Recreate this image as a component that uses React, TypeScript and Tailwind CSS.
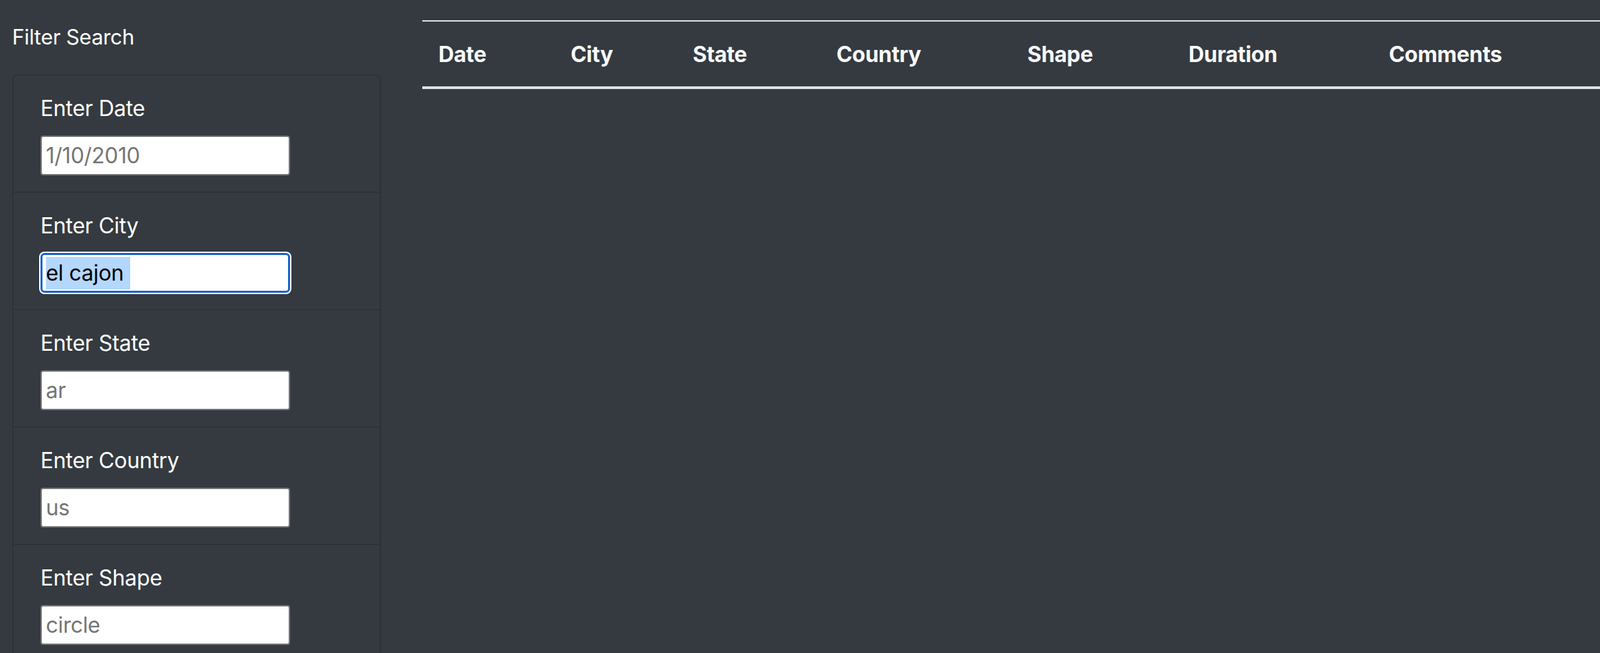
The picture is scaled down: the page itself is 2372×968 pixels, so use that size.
import React from "react";

interface FilterField {
  id: string;
  label: string;
  placeholder: string;
  focused?: boolean;
  value?: string;
}

const fields: FilterField[] = [
  { id: "datetime", label: "Enter Date", placeholder: "1/10/2010" },
  { id: "city", label: "Enter City", placeholder: "", focused: true, value: "el cajon" },
  { id: "state", label: "Enter State", placeholder: "ar" },
  { id: "country", label: "Enter Country", placeholder: "us" },
  { id: "shape", label: "Enter Shape", placeholder: "circle" },
];

const columns = [
  { name: "Date", width: "w-[196px]" },
  { name: "City", width: "w-[181px]" },
  { name: "State", width: "w-[213px]" },
  { name: "Country", width: "w-[283px]" },
  { name: "Shape", width: "w-[239px]" },
  { name: "Duration", width: "w-[297px]" },
  { name: "Comments", width: "" },
];

const App: React.FC = () => {
  return (
    <div className="min-h-screen bg-[#343a40] text-white font-['Inter',sans-serif] flex">
      {/* Sidebar filters */}
      <aside className="w-[565px] shrink-0 pl-[18px]">
        <h5 className="pt-[31px] mb-[31px] text-[31px] leading-[48px] tracking-[-0.3px]">
          Filter Search
        </h5>
        <ul className="border-2 border-[#2e3338] rounded-lg">
          {fields.map((field, index) => (
            <li
              key={field.id}
              className={`px-[40px] ${
                index > 0 ? "border-t-2 border-[#2e3338] pt-[25px] pb-[24px]" : "pt-[25px] pb-[24px]"
              }`}
            >
              <label
                htmlFor={field.id}
                className="block text-[32px] leading-[48px] mb-[16px] tracking-[-0.3px]"
              >
                {field.label}
              </label>
              {field.focused ? (
                <div className="w-[370px] h-[59px] bg-white border-[3px] border-[#1763d4] rounded-[6px] shadow-[0_0_0_2px_#ffffff] flex items-center pl-[5px]">
                  <span className="bg-[#b4d7fd] text-black text-[32px] leading-[48px] pr-[10px] tracking-[-0.3px]">
                    {field.value}
                  </span>
                </div>
              ) : (
                <input
                  id={field.id}
                  type="text"
                  placeholder={field.placeholder}
                  className="block w-[370px] h-[59px] bg-white border-2 border-[#767676] rounded-[4px] px-[6px] text-[32px] text-black placeholder:text-[#757575] tracking-[-0.3px] outline-none"
                />
              )}
            </li>
          ))}
        </ul>
      </aside>

      {/* Results table */}
      <main className="flex-1 pl-[61px] pt-[30px]">
        <table className="w-full border-collapse text-left">
          <thead>
            <tr className="border-t-2 border-[#dee2e6]">
              {columns.map((col) => (
                <th
                  key={col.name}
                  className={`${col.width} px-[24px] pt-[25px] pb-[23px] text-[32px] leading-[48px] font-bold text-[#f8f9fa] border-b-4 border-[#dee2e6] tracking-[-0.3px]`}
                >
                  {col.name}
                </th>
              ))}
            </tr>
          </thead>
          <tbody></tbody>
        </table>
      </main>
    </div>
  );
};

export default App;
